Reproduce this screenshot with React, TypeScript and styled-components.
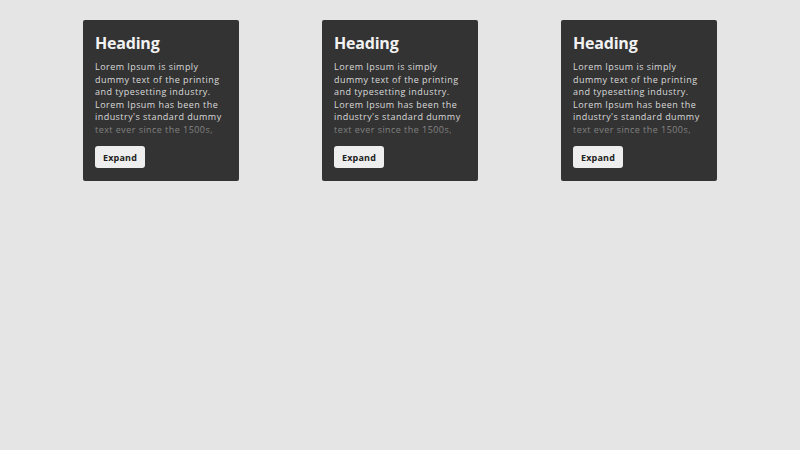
import React from "react";
import styled, { createGlobalStyle } from "styled-components";

const Global = createGlobalStyle`
  html, body { margin: 0; padding: 0; background: #e5e5e5; }
  body { font-family: "Open Sans", "Liberation Sans", sans-serif; }
`;

const Row = styled.div`
  display: flex;
  justify-content: space-evenly;
  align-items: flex-start;
  padding-top: 20px;
  width: 800px;
  height: 450px;
  box-sizing: border-box;
`;

const Card = styled.div`
  width: 156px;
  height: 161px;
  box-sizing: border-box;
  background: #333333;
  border-radius: 2px;
  padding: 13px 12px 13px 12px;
  display: flex;
  flex-direction: column;
`;

const Heading = styled.h2`
  margin: 0;
  font-size: 16px;
  line-height: 20px;
  font-weight: 700;
  letter-spacing: -0.2px;
  color: #f2f2f2;
`;

const TextWrap = styled.div`
  position: relative;
  margin-top: 8px;
  height: 76px;
  overflow: hidden;
`;

const Body = styled.p`
  margin: 0;
  font-size: 9px;
  line-height: 12.6px;
  letter-spacing: 0.45px;
  color: #dadada;
`;

const Fade = styled.div`
  position: absolute;
  left: 0;
  right: 0;
  bottom: 0;
  height: 16px;
  background: linear-gradient(rgba(51, 51, 51, 0.35), rgba(51, 51, 51, 0.7));
`;

const Button = styled.button`
  align-self: flex-start;
  margin-top: 9px;
  height: 22px;
  width: 50px;
  padding: 0;
  border: none;
  border-radius: 3px;
  background: #eeeeee;
  color: #222;
  font-family: "Open Sans", "Liberation Sans", sans-serif;
  font-size: 9px;
  font-weight: 700;
  letter-spacing: 0.2px;
  cursor: pointer;
`;

const text =
  "Lorem Ipsum is simply dummy text of the printing and typesetting industry. Lorem Ipsum has been the industry's standard dummy text ever since the 1500s, when an unknown printer took a galley of type and scrambled it.";

export default function App() {
  return (
    <>
      <Global />
      <Row>
        {[0, 1, 2].map((i) => (
          <Card key={i}>
            <Heading>Heading</Heading>
            <TextWrap>
              <Body>{text}</Body>
              <Fade />
            </TextWrap>
            <Button>Expand</Button>
          </Card>
        ))}
      </Row>
    </>
  );
}
